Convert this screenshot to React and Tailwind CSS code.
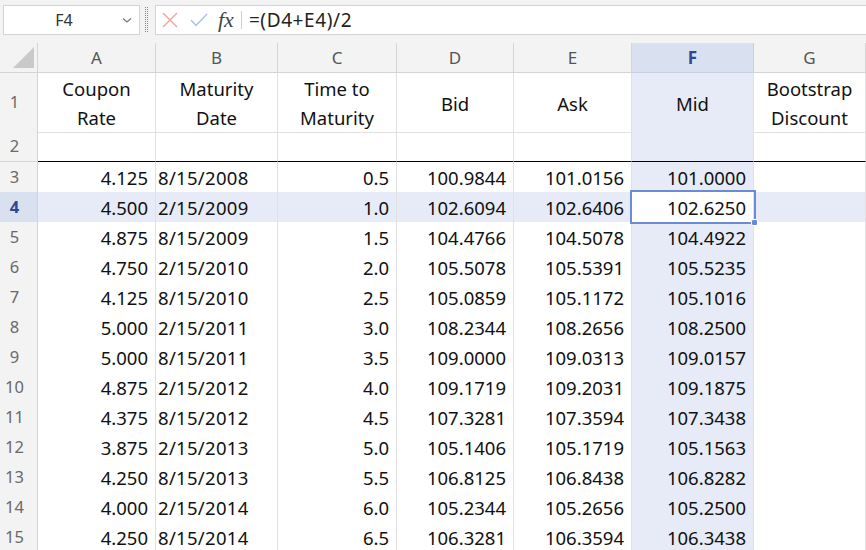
import React from 'react';

const rows = [
  [3, '4.125', '8/15/2008', '0.5', '100.9844', '101.0156', '101.0000'],
  [4, '4.500', '2/15/2009', '1.0', '102.6094', '102.6406', '102.6250'],
  [5, '4.875', '8/15/2009', '1.5', '104.4766', '104.5078', '104.4922'],
  [6, '4.750', '2/15/2010', '2.0', '105.5078', '105.5391', '105.5235'],
  [7, '4.125', '8/15/2010', '2.5', '105.0859', '105.1172', '105.1016'],
  [8, '5.000', '2/15/2011', '3.0', '108.2344', '108.2656', '108.2500'],
  [9, '5.000', '8/15/2011', '3.5', '109.0000', '109.0313', '109.0157'],
  [10, '4.875', '2/15/2012', '4.0', '109.1719', '109.2031', '109.1875'],
  [11, '4.375', '8/15/2012', '4.5', '107.3281', '107.3594', '107.3438'],
  [12, '3.875', '2/15/2013', '5.0', '105.1406', '105.1719', '105.1563'],
  [13, '4.250', '8/15/2013', '5.5', '106.8125', '106.8438', '106.8282'],
  [14, '4.000', '2/15/2014', '6.0', '105.2344', '105.2656', '105.2500'],
  [15, '4.250', '8/15/2014', '6.5', '106.3281', '106.3594', '106.3438'],
];

const grid = 'grid grid-cols-[38px_118px_122px_119px_117px_118px_122px_1fr]';

function RowHead({ n, active }) {
  return (
    <div
      className={
        active
          ? 'flex items-center justify-center pr-2 bg-[#d9e0f0] border-r border-b border-[#d5d5d5] text-[16.5px] font-bold text-[#2b4a8f]'
          : 'flex items-center justify-center pr-2 bg-[#f3f3f3] border-r border-b border-[#d5d5d5] text-[16.5px] text-[#6a6a6a]'
      }
    >
      {n}
    </div>
  );
}

function DataRow({ r }) {
  const [n, a, b, c, d, e, f] = r;
  const sel = n === 4;
  const bg = sel ? 'bg-[#e6ebf7]' : 'bg-white';
  const cell = 'flex items-center border-r border-b border-[#e1e1e1] pt-[2px] ';
  return (
    <div className={grid + ' h-[30px]'}>
      <RowHead n={n} active={sel} />
      <div className={cell + 'justify-end pr-[7px] ' + bg}>{a}</div>
      <div className={cell + 'justify-start pl-[2px] tracking-[0.3px] ' + bg}>{b}</div>
      <div className={cell + 'justify-end pr-[7px] ' + bg}>{c}</div>
      <div className={cell + 'justify-end pr-[7px] ' + bg}>{d}</div>
      <div className={cell + 'justify-end pr-[7px] ' + bg}>{e}</div>
      {sel ? (
        <div className={cell + 'justify-end pr-[7px] bg-white relative'}>
          {f}
          <div className="absolute left-[-2px] top-[-2px] right-[-3px] bottom-[-2px] border-2 border-[#6a8cd6] z-10" />
          <div className="absolute right-[-5px] bottom-[-4px] w-[7px] h-[7px] rounded-[2px] bg-[#6a8cd6] border border-white z-20" />
        </div>
      ) : (
        <div className={cell + 'justify-end pr-[7px] bg-[#e6ebf7]'}>{f}</div>
      )}
      <div className={cell + bg}></div>
    </div>
  );
}

export default function App() {
  const colHead = 'flex items-center justify-center border-r border-b border-[#d5d5d5] text-[17px] text-[#555]';
  const head = 'flex flex-col items-center justify-center border-r border-b border-[#e1e1e1] leading-[29px] pt-[1px]';
  return (
    <div className="w-[866px] h-[550px] overflow-hidden bg-white font-['Noto_Sans',sans-serif] text-[18.5px] text-[#111]">
      {/* formula bar */}
      <div className="h-[43px] bg-[#f3f3f3] flex items-start pt-[5px] pl-[3px]">
        <div className="w-[137px] h-[30px] bg-white border border-[#d4d4d4] flex items-center">
          <div className="flex-1 text-center text-[16px] text-[#333] pl-[3px]">F4</div>
          <svg width="12" height="12" viewBox="0 0 12 12" className="mr-[6px]">
            <path d="M2 4.5 L6 8 L10 4.5" fill="none" stroke="#777" strokeWidth="1.2" />
          </svg>
        </div>
        <svg width="6" height="28" className="ml-[4px] mt-[1px]">
          {Array.from({ length: 13 }).map((_, i) => (
            <g key={i}>
              <rect x="1" y={1 + i * 2} width="1" height="1" fill="#888" />
              <rect x="3" y={1 + i * 2} width="1" height="1" fill="#888" />
            </g>
          ))}
        </svg>
        <div className="ml-[5px] flex-1 h-[30px] bg-white border border-[#d4d4d4] border-r-0 flex items-center">
          <svg width="18" height="18" viewBox="0 0 18 18" className="ml-[5px]">
            <path d="M2 2 L16 16 M16 2 L2 16" stroke="#f1a298" strokeWidth="1.4" fill="none" />
          </svg>
          <svg width="20" height="18" viewBox="0 0 20 18" className="ml-[10px]">
            <path d="M2 9 L7 14.5 L18 3" stroke="#a6c2ef" strokeWidth="1.5" fill="none" />
          </svg>
          <span className="ml-[9px] italic font-['Liberation_Serif',serif] text-[22px] text-[#444] leading-none">fx</span>
          <div className="ml-[7px] w-px h-[18px] bg-[#cfcfcf]" />
          <span className="ml-[7px] text-[19px] text-[#222] tracking-[0.6px]">=(D4+E4)/2</span>
        </div>
      </div>

      {/* column headers */}
      <div className={grid + ' h-[30px] bg-[#f3f3f3]'}>
        <div className="border-r border-b border-[#d5d5d5] relative">
          <svg width="38" height="30" className="absolute left-0 top-0">
            <polygon points="34,4 34,25 13,25" fill="#c9c9c9" />
          </svg>
        </div>
        <div className={colHead}>A</div>
        <div className={colHead}>B</div>
        <div className={colHead}>C</div>
        <div className={colHead}>D</div>
        <div className={colHead}>E</div>
        <div className="flex items-center justify-center border-r border-b border-[#c8cfe0] bg-[#d9e0f0] text-[17px] font-bold text-[#2b4a8f]">F</div>
        <div className={colHead}>G</div>
      </div>

      {/* row 1 */}
      <div className={grid + ' h-[59px]'}>
        <RowHead n={1} />
        <div className={head}><span>Coupon</span><span>Rate</span></div>
        <div className={head}><span>Maturity</span><span>Date</span></div>
        <div className={head}><span>Time to</span><span>Maturity</span></div>
        <div className={head}><span>Bid</span></div>
        <div className={head}><span>Ask</span></div>
        <div className={head + ' bg-[#e6ebf7]'}><span>Mid</span></div>
        <div className={head}><span>Bootstrap</span><span>Discount</span></div>
      </div>

      {/* row 2 */}
      <div className={grid + ' h-[30px]'}>
        <RowHead n={2} />
        <div className="border-r border-r-[#e1e1e1] border-b border-b-black"></div>
        <div className="border-r border-r-[#e1e1e1] border-b border-b-black"></div>
        <div className="border-r border-r-[#e1e1e1] border-b border-b-black"></div>
        <div className="border-r border-r-[#e1e1e1] border-b border-b-black"></div>
        <div className="border-r border-r-[#e1e1e1] border-b border-b-black"></div>
        <div className="border-r border-r-[#e1e1e1] border-b border-b-black bg-[#e6ebf7]"></div>
        <div className="border-r border-r-[#e1e1e1] border-b border-b-black"></div>
      </div>

      {rows.map((r) => (
        <DataRow key={r[0]} r={r} />
      ))}
    </div>
  );
}
